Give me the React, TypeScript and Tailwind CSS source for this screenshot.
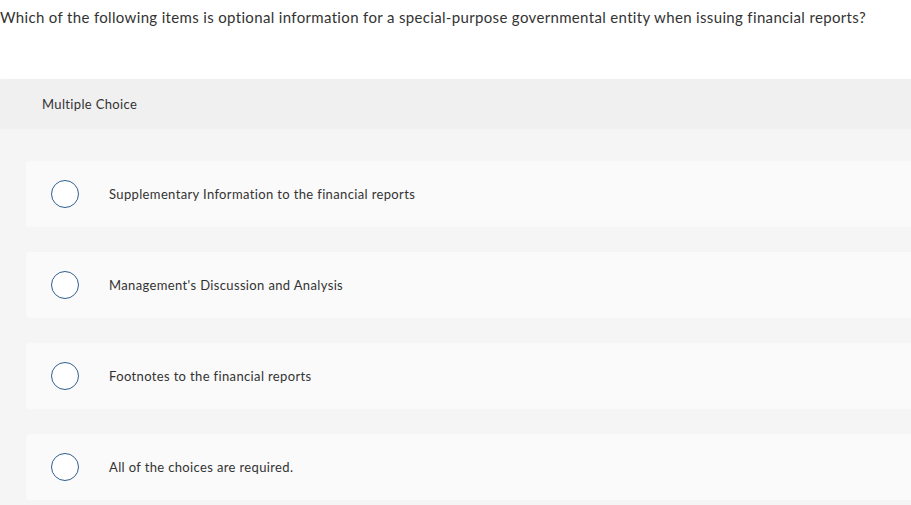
import React from "react";

const options = [
  "Supplementary Information to the financial reports",
  "Management's Discussion and Analysis",
  "Footnotes to the financial reports",
  "All of the choices are required.",
];

export default function App() {
  return (
    <div className="w-[911px] h-[505px] bg-white overflow-hidden text-[#333333] [font-variant-ligatures:none]" style={{ fontFamily: "Lato, 'Open Sans', sans-serif" }}>
      <div className="h-[79px] pt-[7px]">
        <p className="text-[15px] leading-[20px] tracking-[0.34px] m-0">
          Which of the following items is optional information for a special-purpose governmental entity when issuing financial reports?
        </p>
      </div>
      <div className="bg-[#f5f5f5] h-[426px]">
        <div className="h-[50px] bg-[#f0f0f0] rounded-tl-[3px] flex items-center pl-[42px] pt-[2px] text-[13px] tracking-[0.34px]">
          Multiple Choice
        </div>
        <div className="pl-[26px] pt-[32px] flex flex-col gap-[25px]">
          {options.map((o) => (
            <div key={o} className="h-[66px] bg-[#fafafa] rounded-l-[3px] flex items-center">
              <div className="ml-[25px] w-[28px] h-[28px] rounded-full border-[1.5px] border-[#2f5f8f] bg-white shrink-0" />
              <span className="ml-[30px] pt-[2px] text-[13px] tracking-[0.36px]">{o}</span>
            </div>
          ))}
        </div>
      </div>
    </div>
  );
}
